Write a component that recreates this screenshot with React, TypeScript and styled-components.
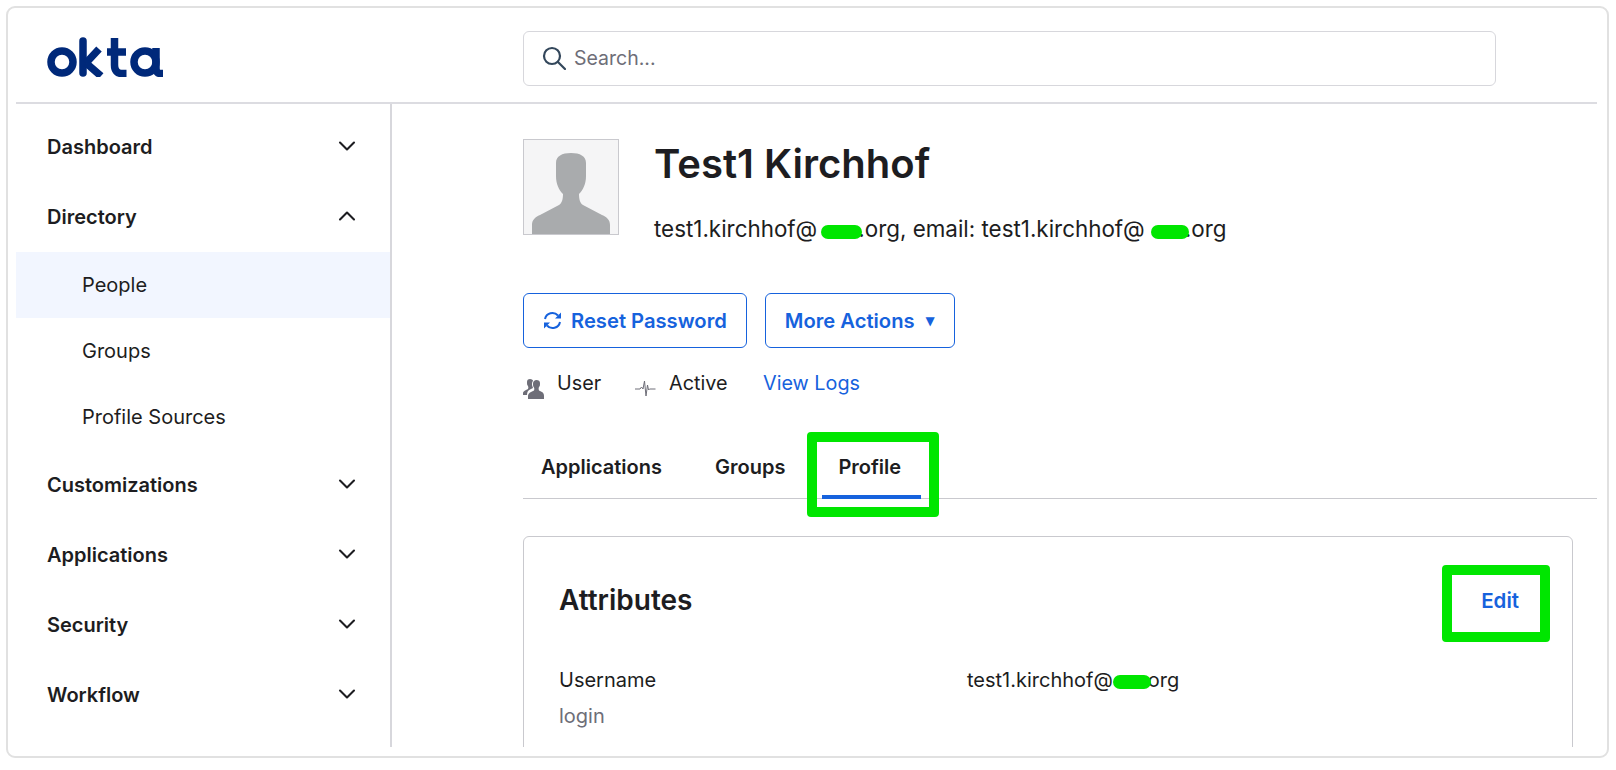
import styled, { createGlobalStyle } from 'styled-components';
import { ChevronDown, ChevronUp } from 'lucide-react';

const GlobalStyle = createGlobalStyle`
    html, body {
        margin: 0;
        padding: 0;
        background: #fff;
    }
    * {
        box-sizing: border-box;
    }
    body {
        font-family: Inter, "Liberation Sans", sans-serif;
        color: #1d1d21;
    }
`;

const Page = styled.div`
    width: 1616px;
    height: 770px;
    padding: 6px 7px 12px 6px;
    overflow: hidden;
`;

const Frame = styled.div`
    height: 752px;
    border: 2px solid #e1e1e1;
    border-radius: 9px;
    padding: 0 10px 9px 8px;
    display: flex;
    flex-direction: column;
`;

const Header = styled.header`
    height: 96px;
    flex-shrink: 0;
    display: flex;
    align-items: center;
    border-bottom: 2px solid #dcdce1;
`;

const LogoBox = styled.div`
    width: 507px;
    margin-top: 3px;
    padding-left: 31px;
    display: flex;
`;

const SearchBox = styled.div`
    width: 973px;
    height: 55px;
    margin-top: 6px;
    border: 1.5px solid #d7d7dc;
    border-radius: 6px;
    padding-left: 18px;
    display: flex;
    align-items: center;
    gap: 8px;
`;

const SearchText = styled.span`
    font-size: 19.500px;
    color: #6e6e78;
`;

const Body = styled.div`
    flex: 1;
    min-height: 0;
    display: flex;
    overflow: hidden;
`;

const Sidebar = styled.nav`
    width: 376px;
    flex-shrink: 0;
    padding-top: 8px;
    border-right: 2px solid #d7d7dc;
`;

const NavRow = styled.div`
    height: 70px;
    padding: 0 29px 0 31px;
    display: flex;
    align-items: center;
    justify-content: space-between;
    font-size: 20px;
    font-weight: 600;
`;

const Down = styled(ChevronDown)`
    margin-top: -3px;
`;

const Up = styled(ChevronUp)`
    margin-top: -3px;
`;

const SubRow = styled.div<{ $active?: boolean }>`
    height: 66px;
    padding-left: 66px;
    display: flex;
    align-items: center;
    font-size: 20px;
    background: ${props => (props.$active ? '#f2f6ff' : 'transparent')};
`;

const Main = styled.main`
    flex: 1;
    min-width: 0;
    padding: 35px 0 0 131px;
`;

const ProfileHead = styled.div`
    display: flex;
    gap: 35px;
`;

const Avatar = styled.div`
    width: 96px;
    height: 96px;
    flex-shrink: 0;
    background: #f5f5f6;
    border: 1px solid #c9c9ce;
    display: flex;
`;

const HeadText = styled.div`
    display: flex;
    flex-direction: column;
`;

const Title = styled.h1`
    margin: 0;
    font-size: 40px;
    line-height: 50px;
    font-weight: 600;
`;

const Email = styled.div`
    margin-top: 26px;
    font-size: 22.400px;
    line-height: 28px;
`;

const Redact = styled.span<{ $width: number; $offset: number; $overlap: number }>`
    display: inline-block;
    position: relative;
    width: ${props => props.$width}px;
    height: 14px;
    margin-left: ${props => props.$offset}px;
    margin-right: ${props => -props.$overlap}px;
    border-radius: 7px;
    background: #00e600;
    vertical-align: -2px;
`;

const Actions = styled.div`
    margin-top: 50px;
    display: flex;
    gap: 18px;
`;

const ActionButton = styled.button`
    height: 55px;
    padding: 0 19px;
    display: flex;
    align-items: center;
    gap: 9px;
    background: #fff;
    border: 1.5px solid #1662dd;
    border-radius: 6px;
    color: #1662dd;
    font-family: inherit;
    font-size: 20.200px;
    font-weight: 600;
`;

const Caret = styled.span`
    font-family: "DejaVu Sans", sans-serif;
    font-size: 12px;
    margin-left: 2px;
`;

const MetaRow = styled.div`
    margin-top: 20px;
    height: 30px;
    display: flex;
    align-items: center;
    font-size: 19.800px;
`;

const MetaItem = styled.span<{ $width: number }>`
    width: ${props => props.$width}px;
    display: flex;
    align-items: center;
    gap: 13px;

    svg {
        margin-top: 10px;
    }
`;

const Link = styled.a`
    color: #1662dd;
`;

const Tabs = styled.div`
    margin-top: 42px;
    height: 59px;
    display: flex;
    gap: 17px;
    border-bottom: 1.5px solid #c9c9ce;
`;

const Tab = styled.div<{ $active?: boolean }>`
    position: relative;
    margin-left: ${props => (props.$active ? '2px' : '0')};
    padding: 0 ${props => (props.$active ? '20px' : '18px')} 2px ${props => (props.$active ? '16px' : '18px')};
    display: flex;
    align-items: center;
    font-size: 20px;
    font-weight: 600;
    border-bottom: 4px solid ${props => (props.$active ? '#1662dd' : 'transparent')};
    margin-bottom: -1px;
`;

const Highlight = styled.span<{ $inset: string }>`
    position: absolute;
    inset: ${props => props.$inset};
    border: 10px solid #00e600;
    border-radius: 4px;
`;

const Card = styled.section`
    margin: 37px 24px 0 0;
    height: 260px;
    padding: 0 53px 0 35px;
    border: 1.5px solid #c9c9ce;
    border-radius: 6px;
`;

const CardHead = styled.div`
    height: 126px;
    display: flex;
    align-items: center;
    justify-content: space-between;
`;

const CardTitle = styled.h2`
    margin: 0;
    font-size: 28px;
    font-weight: 600;
`;

const EditLink = styled.a`
    position: relative;
    color: #1662dd;
    font-size: 20.500px;
    font-weight: 600;
`;

const Attribute = styled.div`
    margin-top: 3px;
    display: grid;
    grid-template-columns: 408px 1fr;
    font-size: 20px;
    line-height: 28px;
`;

const AttributeName = styled.div`
    display: flex;
    flex-direction: column;
    gap: 8px;
`;

const Muted = styled.span`
    color: #6e6e78;
`;

const OktaLogo = () => (
    <svg width="116" height="40" viewBox="0 0 116 40" fill="none" stroke="#00297a" strokeWidth="7.500">
        <circle cx="15" cy="25" r="11" />
        <path d="M36 4v32" strokeLinecap="round" />
        <path d="M39 26 52 12M39 26l15 13" />
        <path d="M67.500 1v27c0 6 3 8.500 7 8.500h5M60 15h19" />
        <circle cx="98" cy="25" r="11" />
        <path d="M109 11v20c0 4 2 5.500 4 5.500h3" />
    </svg>
);

const SearchIcon = () => (
    <svg width="24" height="24" viewBox="0 0 24 24" fill="none" stroke="#33475b" strokeWidth="2.200" strokeLinecap="round">
        <circle cx="10" cy="10" r="8" />
        <path d="m16 16 7 7" />
    </svg>
);

const AvatarShape = () => (
    <svg width="94" height="94" viewBox="0 0 94 94" fill="#a9abad">
        <path d="M8 94V85c0-5 3-8 8-10l19-10c3-2 4-6 4-11-4-4-7-10-7-18V23c0-7 6-10 15-10s15 3 15 10v13c0 8-3 14-7 18 0 5 1 9 4 11l19 10c5 2 8 5 8 10v9z" />
    </svg>
);

const RefreshIcon = () => (
    <svg width="19" height="19" viewBox="0 0 19 19" fill="none" stroke="#1662dd" strokeWidth="2">
        <path d="M2 8a7.500 7.500 0 0 1 13-3.500" />
        <path d="M17 11a7.500 7.500 0 0 1-13 3.500" />
        <path d="M18 1.500v6h-6zM1 17.500v-6h6z" fill="#1662dd" stroke="none" />
    </svg>
);

const UserIcon = () => (
    <svg width="21" height="21" viewBox="0 0 21 21" fill="#6e6e78">
        <path d="M0 17v-2c0-1 1-2 3-3l2-1c.5-1 .5-2 0-3-1-1-1-2-1-4 0-2 1-3 3-3s3 1 3 2c-1 1-1 2-1 4l1 3-2 1c-3 1-4 3-4 6z" />
        <path d="M5 21v-3c0-2 1-3 3-4l3-1.500c.5-1 .5-2 0-3-1-1-1-2-1-4 0-2 1.500-3.500 3.500-3.500S17 3 17 5c0 2 0 3-1 4-.5 1-.5 2 0 3.500l3 1.500c1.500 1 2 2 2 4v3z" />
    </svg>
);

const PulseIcon = () => (
    <svg width="21" height="21" viewBox="0 0 21 21" fill="none" stroke="#6e6e78" strokeWidth="1">
        <path d="M0 11h5l1.500-2 1.500 2 1.500-8 1.500 15 1.500-11 1 5 1-1h6" />
    </svg>
);

const App = () => {
    return (
        <Page>
            <GlobalStyle />
            <Frame>
                <Header>
                    <LogoBox>
                        <OktaLogo />
                    </LogoBox>
                    <SearchBox>
                        <SearchIcon />
                        <SearchText>Search...</SearchText>
                    </SearchBox>
                </Header>
                <Body>
                    <Sidebar>
                        <NavRow>Dashboard <Down size={28} strokeWidth={1.8} /></NavRow>
                        <NavRow>Directory <Up size={28} strokeWidth={1.8} /></NavRow>
                        <SubRow $active>People</SubRow>
                        <SubRow>Groups</SubRow>
                        <SubRow>Profile Sources</SubRow>
                        <NavRow>Customizations <Down size={28} strokeWidth={1.8} /></NavRow>
                        <NavRow>Applications <Down size={28} strokeWidth={1.8} /></NavRow>
                        <NavRow>Security <Down size={28} strokeWidth={1.8} /></NavRow>
                        <NavRow>Workflow <Down size={28} strokeWidth={1.8} /></NavRow>
                    </Sidebar>
                    <Main>
                        <ProfileHead>
                            <Avatar>
                                <AvatarShape />
                            </Avatar>
                            <HeadText>
                                <Title>Test1 Kirchhof</Title>
                                <Email>
                                    test1.kirchhof@<Redact $width={41} $offset={4} $overlap={4} />.org, email: test1.kirchhof@<Redact $width={38} $offset={6} $overlap={4} />.org
                                </Email>
                            </HeadText>
                        </ProfileHead>
                        <Actions>
                            <ActionButton>
                                <RefreshIcon />
                                Reset Password
                            </ActionButton>
                            <ActionButton>
                                More Actions
                                <Caret>▼</Caret>
                            </ActionButton>
                        </Actions>
                        <MetaRow>
                            <MetaItem $width={112}>
                                <UserIcon />
                                User
                            </MetaItem>
                            <MetaItem $width={128}>
                                <PulseIcon />
                                Active
                            </MetaItem>
                            <Link>View Logs</Link>
                        </MetaRow>
                        <Tabs>
                            <Tab>Applications</Tab>
                            <Tab>Groups</Tab>
                            <Tab $active>
                                Profile
                                <Highlight $inset="-8px -18px -22px -15px" />
                            </Tab>
                        </Tabs>
                        <Card>
                            <CardHead>
                                <CardTitle>Attributes</CardTitle>
                                <EditLink>
                                    Edit
                                    <Highlight $inset="-23px -31px -29px -39px" />
                                </EditLink>
                            </CardHead>
                            <Attribute>
                                <AttributeName>
                                    <span>Username</span>
                                    <Muted>login</Muted>
                                </AttributeName>
                                <div>
                                    test1.kirchhof@<Redact $width={38} $offset={0} $overlap={3} />org
                                </div>
                            </Attribute>
                        </Card>
                    </Main>
                </Body>
            </Frame>
        </Page>
    );
};

export default App;
